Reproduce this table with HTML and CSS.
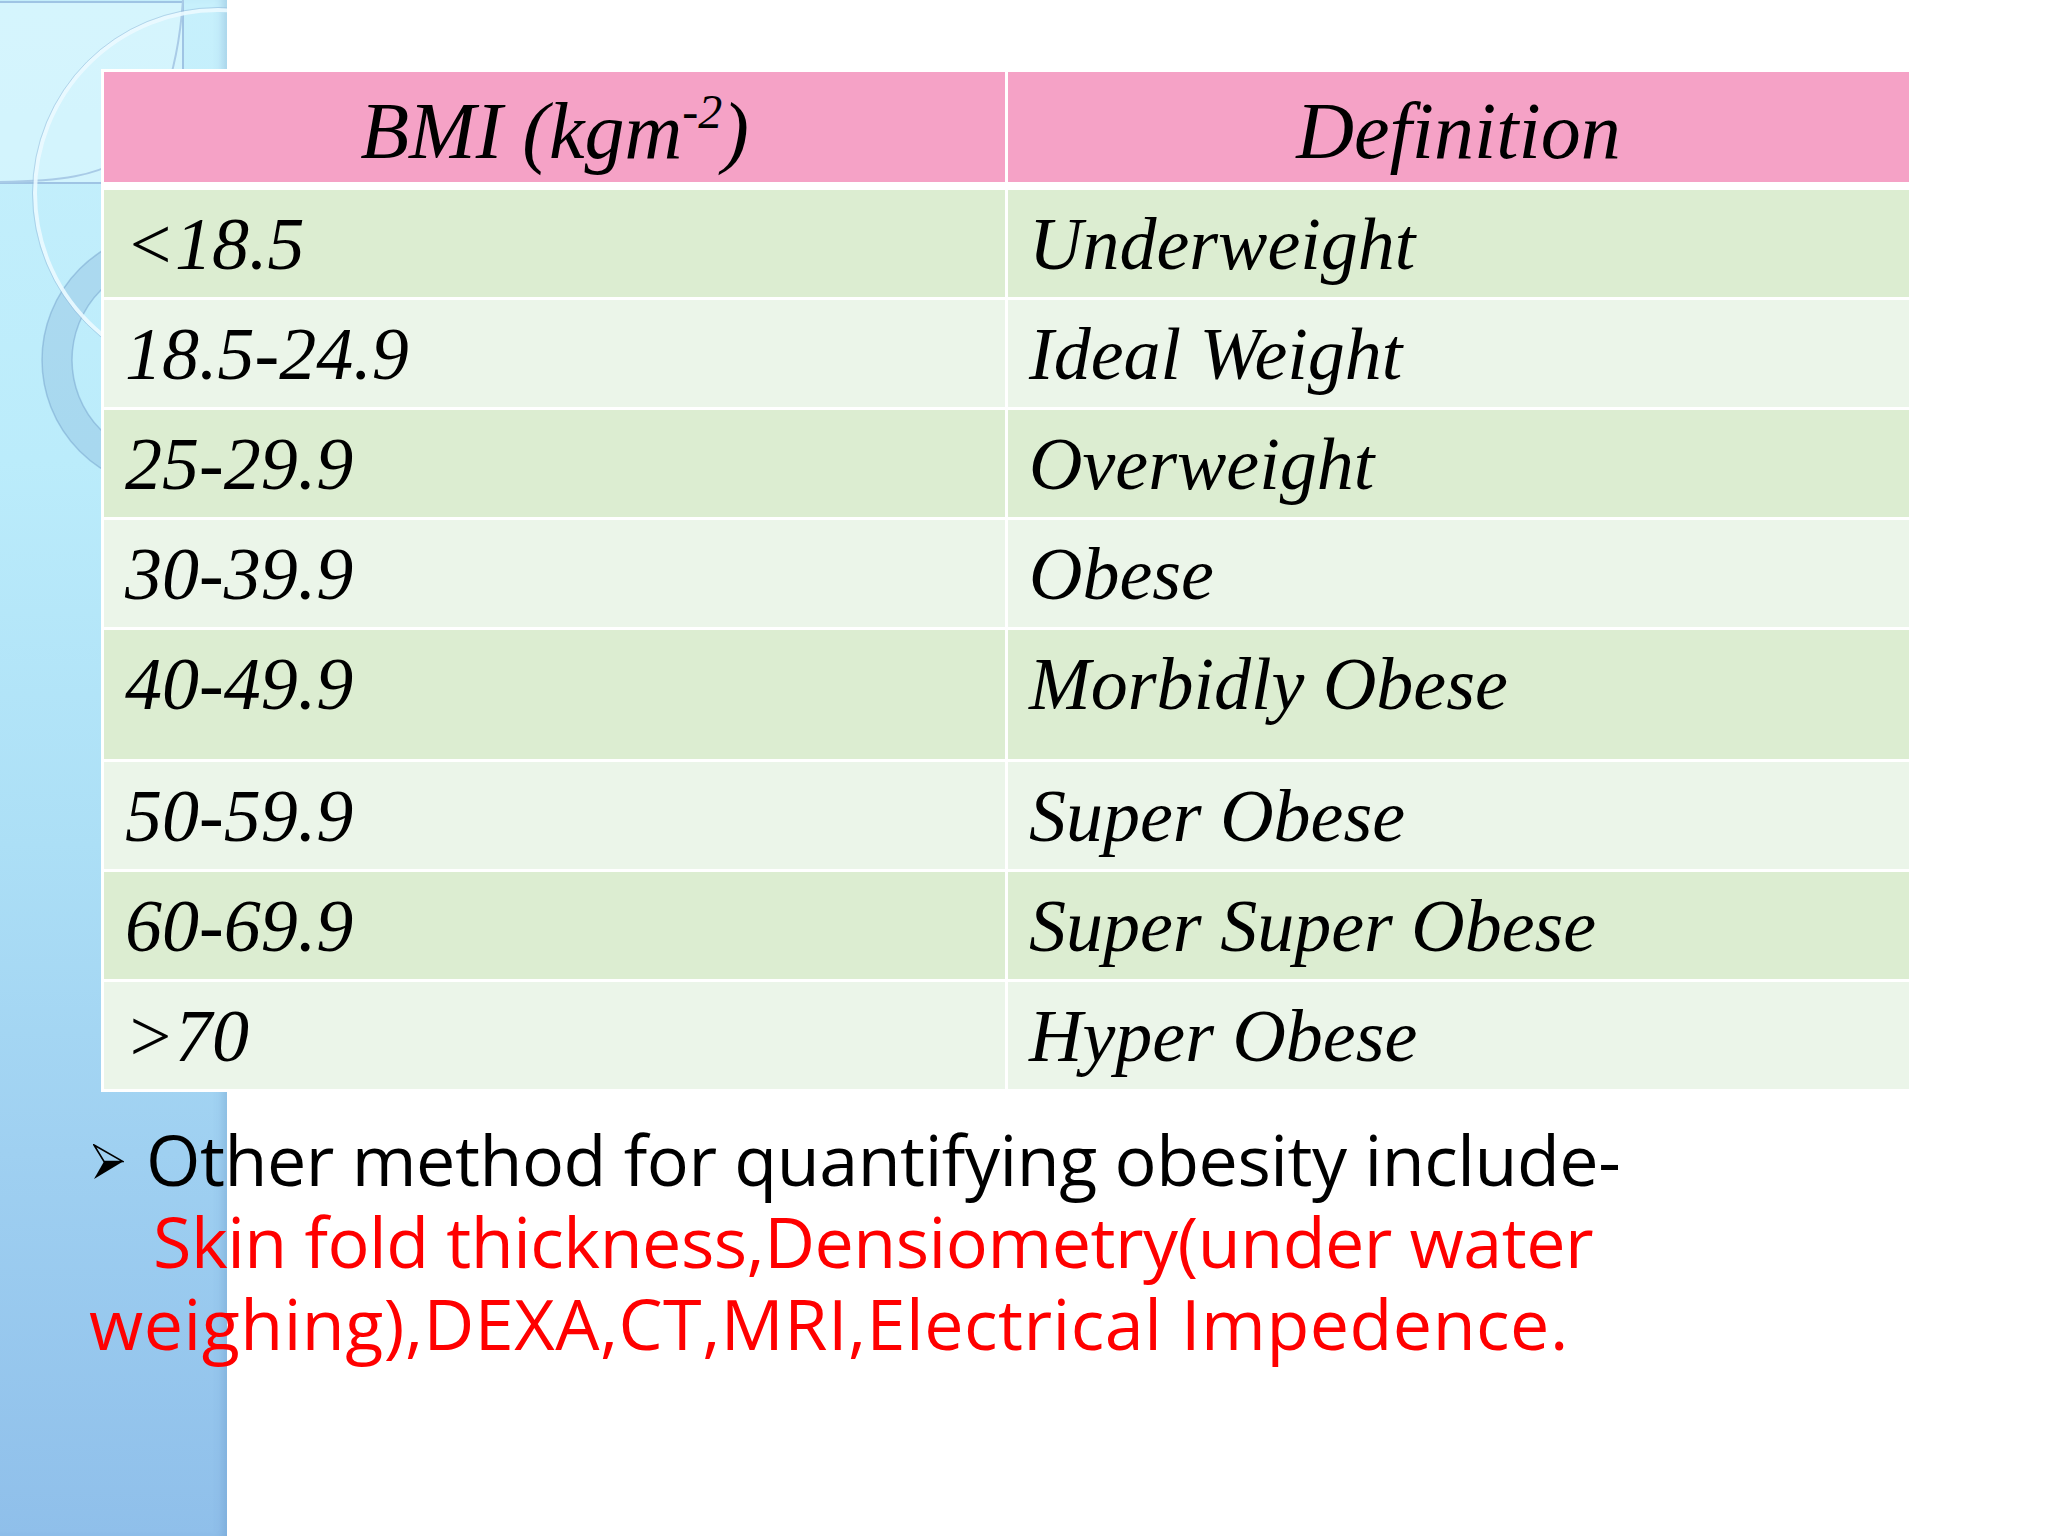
FILE: index.html
```html
<!DOCTYPE html>
<html lang="en">
<head>
<meta charset="utf-8">
<title>BMI classification</title>
<link rel="stylesheet" href="styles.css">
</head>
<body>
<div class="slide">
  <svg class="deco" width="227" height="1536" viewBox="0 0 227 1536" aria-hidden="true">
    <rect class="deco-square" x="-2" y="2" width="185" height="181"/>
    <path class="deco-arc" d="M183 0 C178 70 160 130 120 160 C95 175 65 181 0 182"/>
    <circle class="deco-ring" cx="171" cy="360" r="114"/>
    <circle class="deco-ring-edge" cx="171" cy="360" r="129"/>
    <circle class="deco-ring-edge" cx="171" cy="360" r="99"/>
    <circle class="deco-thin" cx="218" cy="193" r="183"/>
    <circle class="deco-thin-edge" cx="218" cy="193" r="185.5"/>
  </svg>
  <main class="content">
    <div class="table">
      <div class="row head">
        <div class="cell">BMI (kgm<sup>-2</sup>)</div>
        <div class="cell">Definition</div>
      </div>
      <div class="row dark">
        <div class="cell">&lt;18.5</div>
        <div class="cell">Underweight</div>
      </div>
      <div class="row light">
        <div class="cell">18.5-24.9</div>
        <div class="cell">Ideal Weight</div>
      </div>
      <div class="row dark">
        <div class="cell">25-29.9</div>
        <div class="cell">Overweight</div>
      </div>
      <div class="row light">
        <div class="cell">30-39.9</div>
        <div class="cell">Obese</div>
      </div>
      <div class="row dark tall">
        <div class="cell">40-49.9</div>
        <div class="cell">Morbidly Obese</div>
      </div>
      <div class="row light">
        <div class="cell">50-59.9</div>
        <div class="cell">Super Obese</div>
      </div>
      <div class="row dark">
        <div class="cell">60-69.9</div>
        <div class="cell">Super Super Obese</div>
      </div>
      <div class="row light">
        <div class="cell">&gt;70</div>
        <div class="cell">Hyper Obese</div>
      </div>
    </div>
    <div class="note">
      <p class="line first"><svg class="bullet" width="31" height="36" viewBox="0 0 31 36" aria-hidden="true"><path d="M1 1 L30 17.5 L11 17.5 Z" fill="none" stroke="#000" stroke-width="1.6" stroke-linejoin="miter"/><path d="M11 17.5 L30 17.5 L1 35 Z" fill="#000"/></svg><span class="txt l1">Other method for quantifying obesity include-</span></p>
      <p class="line red indent"><span class="txt l2">Skin fold thickness,Densiometry(under water</span></p>
      <p class="line red"><span class="txt l3">weighing),DEXA,CT,MRI,Electrical Impedence.</span></p>
    </div>
  </main>
</div>
</body>
</html>
```

FILE: styles.css
```css
html, body {
  margin: 0;
  padding: 0;
  background: #ffffff;
}

.slide {
  position: relative;
  width: 2048px;
  height: 1536px;
  overflow: hidden;
  background: #ffffff;
}

.deco {
  position: absolute;
  left: 0;
  top: 0;
  z-index: 0;
  background: linear-gradient(to bottom, #c7f0fc 0%, #bbecfb 30%, #acdff6 55%, #9fd0f1 75%, #8fbfea 100%);
  box-shadow: inset -10px 0 10px -6px rgba(70, 120, 175, 0.25);
}

.deco-square {
  fill: rgba(230, 250, 255, 0.45);
  stroke: #9fc4e4;
  stroke-width: 2;
}

.deco-arc {
  fill: none;
  stroke: #a9cbe7;
  stroke-width: 2;
}

.deco-ring {
  fill: none;
  stroke: rgba(120, 165, 210, 0.28);
  stroke-width: 30;
}

.deco-ring-edge {
  fill: none;
  stroke: rgba(110, 155, 200, 0.45);
  stroke-width: 1.5;
}

.deco-thin {
  fill: none;
  stroke: rgba(235, 250, 255, 0.9);
  stroke-width: 4;
}

.deco-thin-edge {
  fill: none;
  stroke: rgba(140, 180, 215, 0.5);
  stroke-width: 1;
}

.content {
  position: relative;
  z-index: 1;
  padding-top: 69px;
}

.table {
  margin-left: 101px;
  width: 1811px;
  box-sizing: border-box;
  padding: 3px;
  background: #ffffff;
  display: flex;
  flex-direction: column;
  gap: 3px;
  font-family: "Liberation Serif", "Times New Roman", serif;
  font-style: italic;
  color: #000000;
}

.row {
  display: grid;
  grid-template-columns: 901px 901px;
  column-gap: 3px;
  height: 107px;
}

.row .cell {
  box-sizing: border-box;
  padding: 17px 21px 0;
  font-size: 74px;
  line-height: 74px;
  white-space: nowrap;
}

.row.head {
  height: 110px;
  margin-bottom: 5px;
}

.row.head .cell {
  background: #f5a2c6;
  font-size: 80px;
  line-height: 80px;
  padding-top: 19px;
  text-align: center;
}

.row.head sup {
  font-size: 0.6em;
  line-height: 0;
  vertical-align: 0.62em;
}

.row.dark .cell {
  background: #dcedd1;
}

.row.light .cell {
  background: #ebf5e9;
}

.row.tall {
  height: 129px;
}

.note {
  margin-top: 26px;
  padding-left: 89px;
  font-family: "Open Sans", "DejaVu Sans", sans-serif;
  font-size: 70px;
  line-height: 82px;
  color: #000000;
}

.line {
  margin: 0;
  white-space: nowrap;
}

.line.first {
  display: flex;
  align-items: center;
}

.bullet {
  flex: none;
  margin-left: 4px;
  margin-right: 22px;
  margin-top: 6px;
}

.line .txt {
  display: inline-block;
}

.line .l1 {
  letter-spacing: -0.45px;
}

.line .l2 {
  letter-spacing: -0.5px;
}

.line .l3 {
  letter-spacing: 0.5px;
}

.line.red {
  color: #ff0000;
}

.line.indent {
  padding-left: 64px;
}
```
